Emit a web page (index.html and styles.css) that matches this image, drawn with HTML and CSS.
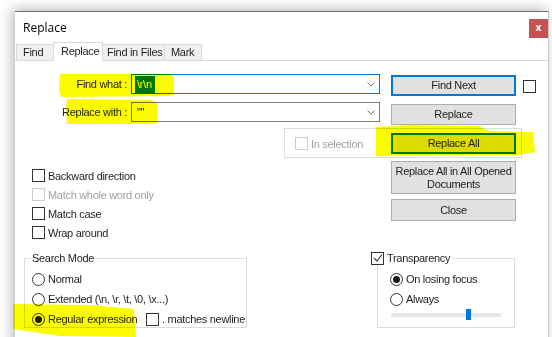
FILE: index.html
```html
<!DOCTYPE html>
<html lang="en">
<head>
  <meta charset="UTF-8" />
  <title>Replace</title>
  <link rel="stylesheet" href="styles.css">
</head>
<body>
  <div class="desktop">
    <div class="window">
      <div class="titlebar">
        <span class="title">Replace</span>
        <span class="close">x</span>
      </div>

      <div class="tabs">
        <div class="tab tab-find">Find</div>
        <div class="tab tab-replace active">Replace</div>
        <div class="tab tab-files">Find in Files</div>
        <div class="tab tab-mark">Mark</div>
      </div>

      <div class="panel">
        <div class="fields">
          <label class="field-label">Find what :</label>
          <div class="combo focused">
            <span class="combo-text"><span class="selected">\r\n</span></span>
            <svg class="chevron" width="8" height="5" viewBox="0 0 8 5"><polyline points="0.5,0.5 4,4 7.5,0.5" fill="none" stroke="#7a7a7a" stroke-width="1"/></svg>
          </div>
          <button class="btn focused row1">Find Next</button>
          <span class="box side-box"></span>

          <label class="field-label">Replace with :</label>
          <div class="combo">
            <span class="combo-text quote">""</span>
            <svg class="chevron" width="8" height="5" viewBox="0 0 8 5"><polyline points="0.5,0.5 4,4 7.5,0.5" fill="none" stroke="#7a7a7a" stroke-width="1"/></svg>
          </div>
          <button class="btn row2">Replace</button>
        </div>

        <div class="middle">
          <div class="options">
            <div class="check"><span class="box"></span>Backward direction</div>
            <div class="check disabled"><span class="box"></span>Match whole word only</div>
            <div class="check"><span class="box"></span>Match case</div>
            <div class="check"><span class="box"></span>Wrap around</div>
          </div>

          <div class="actions">
            <div class="selection-box">
              <div class="check disabled"><span class="box"></span>In selection</div>
              <button class="btn focused replace-all">Replace All</button>
            </div>
            <button class="btn tall">Replace All in All Opened<br>Documents</button>
            <button class="btn close-btn">Close</button>
          </div>
        </div>

        <div class="bottom">
          <div class="group search-mode">
            <div class="group-title">Search Mode</div>
            <div class="group-rows">
              <div class="radio-row"><span class="radio"></span>Normal</div>
              <div class="radio-row"><span class="radio"></span>Extended (\n, \r, \t, \0, \x...)</div>
              <div class="radio-row">
                <span class="regex-item"><span class="radio checked"></span>Regular expression</span>
                <span class="check newline"><span class="box"></span>. matches newline</span>
              </div>
            </div>
          </div>

          <div class="group transparency">
            <div class="group-title check-title">
              <span class="box ticked">
                <svg width="10" height="10" viewBox="0 0 10 10"><polyline points="1,5 4,8 9,1.5" fill="none" stroke="#444" stroke-width="1.2"/></svg>
              </span>Transparency
            </div>
            <div class="group-rows">
              <div class="radio-row"><span class="radio checked"></span>On losing focus</div>
              <div class="radio-row"><span class="radio"></span>Always</div>
              <div class="slider"><span class="thumb"></span></div>
            </div>
          </div>
        </div>
      </div>
    </div>
  </div>

  <!-- highlighter marks drawn over the screenshot -->
  <svg class="marker" width="552" height="337" viewBox="0 0 552 337">
    <polygon points="60,74 170,74 174,77 174,94 168,96 61,97 59,90" />
    <polygon points="67,99 150,100 157,103 157,123 150,124 67,124 66,110" />
    <polygon points="376,127 410,125 478,126 490,131 533,132 535,152 520,155 376,156" />
    <polygon points="13,304 90,305 134,309 136,337 60,336 13,329" />
  </svg>
</body>
</html>
```

FILE: styles.css
```css
body {
  margin: 0;
  width: 552px;
  height: 337px;
  overflow: hidden;
  position: relative;
  background-color: #fff;
  font-family: "Liberation Sans", Arial, sans-serif;
  font-size: 11px;
  letter-spacing: -0.3px;
  color: #1e1e1e;
}

.desktop {
  padding: 11px 0 0 15px;
}

.window {
  width: 533px;
  height: 340px;
  background-color: #fff;
  border-top: 1px solid #707070;
  border-right: 1px solid #c4c4c4;
  box-shadow: -3px -2px 12px rgba(0, 0, 0, 0.28);
}

.titlebar {
  display: flex;
  height: 30px;
}

.title {
  margin: 8px 0 0 8px;
  font-family: "Open Sans", "Noto Sans", sans-serif;
  font-size: 12px;
  line-height: 16px;
  letter-spacing: 0;
  color: #000;
}

.close {
  margin: 7px 0 0 auto;
  width: 19px;
  height: 19px;
  background-color: #c75050;
  color: #fff;
  font-family: "DejaVu Sans", sans-serif;
  font-weight: bold;
  font-size: 10px;
  line-height: 17px;
  text-align: center;
  letter-spacing: 0;
}

.tabs {
  display: flex;
  align-items: flex-end;
  height: 18px;
  padding-left: 1px;
  border-bottom: 1px solid #d9d9d9;
}

.tab {
  box-sizing: border-box;
  height: 16px;
  margin-left: -1px;
  padding-left: 6px;
  border: 1px solid #d9d9d9;
  border-bottom: none;
  background-color: #f0f0f0;
  line-height: 15px;
  white-space: nowrap;
}

.tab-find { width: 38px; margin-left: 0; }
.tab-replace { width: 50px; }
.tab-files { width: 63px; padding-left: 4px; }
.tab-mark { width: 38px; }

.tab.active {
  height: 19px;
  margin-bottom: -1px;
  padding-left: 7px;
  background-color: #fff;
  line-height: 17px;
  position: relative;
}

.panel {
  padding-top: 13px;
}

.fields {
  display: grid;
  grid-template-columns: 116px 260px 132px 13px;
  grid-template-rows: 28px 22px;
  align-items: start;
}

.field-label {
  padding-right: 4px;
  text-align: right;
  line-height: 20px;
  color: #1e1e1e;
}

.combo {
  box-sizing: border-box;
  width: 249px;
  height: 20px;
  display: flex;
  align-items: center;
  justify-content: space-between;
  border: 1px solid #7a7a7a;
  background-color: #fff;
}

.combo.focused {
  border-color: #0078d7;
}

.combo-text {
  padding-left: 3px;
  line-height: 16px;
}

.combo-text.quote {
  padding-left: 5px;
}

.selected {
  display: inline-block;
  padding: 0 3px 0 2px;
  line-height: 17px;
  background-color: #0078d7;
  color: #fff;
}

.chevron {
  margin-right: 4px;
}

.btn {
  box-sizing: border-box;
  width: 125px;
  height: 21px;
  padding: 0;
  border: 1px solid #adadad;
  background-color: #e1e1e1;
  font-family: inherit;
  font-size: 11px;
  letter-spacing: -0.3px;
  color: #1e1e1e;
  line-height: 13px;
}

.btn.focused {
  border-color: #0078d7;
  box-shadow: inset 0 0 0 1px #0078d7;
}

.row1 { margin-top: 1px; }
.row2 { margin-top: 2px; }

.box {
  box-sizing: border-box;
  display: inline-block;
  width: 13px;
  height: 13px;
  border: 1px solid #333;
  background-color: #fff;
  flex-shrink: 0;
}

.side-box {
  margin-top: 6px;
}

.middle {
  display: flex;
  margin-top: 4px;
}

.options {
  box-sizing: border-box;
  width: 269px;
  padding: 38px 0 0 17px;
}

.check {
  display: flex;
  align-items: center;
  gap: 3px;
  height: 19px;
  white-space: nowrap;
}

.check.disabled {
  color: #a0a0a0;
}

.check.disabled .box {
  border-color: #cccccc;
}

.actions {
  display: flex;
  flex-direction: column;
  align-items: flex-start;
}

.selection-box {
  box-sizing: border-box;
  width: 238px;
  height: 30px;
  display: flex;
  align-items: center;
  justify-content: space-between;
  padding: 3px 5px 2px 10px;
  border: 1px solid #dcdcdc;
}

.tall {
  height: 33px;
  margin: 3px 0 0 107px;
}

.close-btn {
  height: 22px;
  margin: 5px 0 0 107px;
}

.bottom {
  display: flex;
  align-items: flex-start;
  margin-top: 16px;
  padding-left: 9px;
}

.group {
  box-sizing: border-box;
  height: 70px;
  border: 1px solid #dcdcdc;
}

.search-mode {
  width: 223px;
}

.transparency {
  width: 138px;
  margin-left: 130px;
}

.group-title {
  width: fit-content;
  height: 14px;
  margin: -8px 0 0 6px;
  padding: 0 1px;
  background-color: #fff;
  line-height: 14px;
}

.check-title {
  display: flex;
  align-items: center;
  gap: 3px;
  margin-left: -7px;
  padding: 0 2px 0 0;
}

.ticked {
  display: flex;
  align-items: center;
  justify-content: center;
}

.group-rows {
  padding: 4px 0 0 7px;
  overflow: hidden;
  white-space: nowrap;
}

.transparency .group-rows {
  padding-left: 12px;
}

.radio-row {
  display: flex;
  align-items: center;
  gap: 3px;
  height: 20px;
}

.regex-item {
  display: flex;
  align-items: center;
  gap: 3px;
  width: 111px;
  flex-shrink: 0;
}

.newline {
  height: 20px;
}

.radio {
  box-sizing: border-box;
  width: 13px;
  height: 13px;
  border: 1px solid #333;
  border-radius: 50%;
  background-color: #fff;
  display: flex;
  align-items: center;
  justify-content: center;
  flex-shrink: 0;
}

.radio.checked::after {
  content: "";
  width: 7px;
  height: 7px;
  border-radius: 50%;
  background-color: #1a1a1a;
}

.slider {
  display: flex;
  align-items: center;
  width: 110px;
  height: 11px;
  margin: 0 0 0 1px;
  background: linear-gradient(#e6e6e6, #e6e6e6) center / 100% 4px no-repeat;
}

.thumb {
  width: 5px;
  height: 11px;
  margin-left: 75px;
  background-color: #0078d7;
}

.marker {
  position: absolute;
  left: 0;
  top: 0;
  pointer-events: none;
  mix-blend-mode: multiply;
}

.marker polygon {
  fill: #fafa00;
}
```
